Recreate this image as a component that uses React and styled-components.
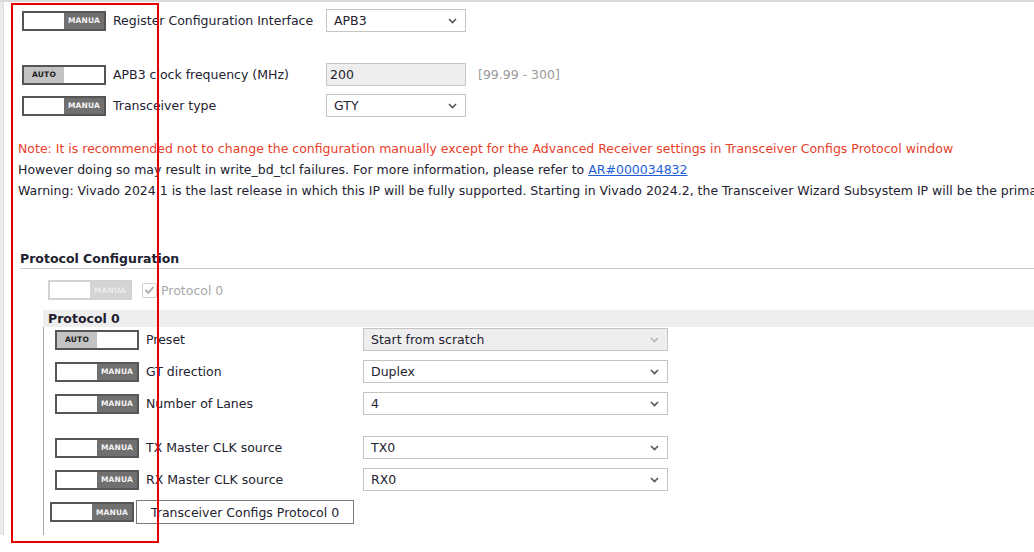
import React from "react";
import styled, { createGlobalStyle } from "styled-components";

const GlobalStyle = createGlobalStyle`
  html, body { margin: 0; padding: 0; background: #fff; overflow: hidden; }
  body { font-family: "DejaVu Sans", Verdana, sans-serif; font-size: 12px; color: #222; }
`;

const colors = {
  texte: "#222230",
  bordure: "#c4c4c4",
  rouge: "#e8402a",
  lien: "#1f5fd8",
  grisFond: "#eeeeee",
};

const topFields = [
  { id: "reg", mode: "manual", label: "Register Configuration Interface", kind: "select", value: "APB3" },
  { id: "clk", mode: "auto", label: "APB3 clock frequency (MHz)", kind: "input", value: "200", hint: "[99.99 - 300]", gapBefore: 31 },
  { id: "type", mode: "manual", label: "Transceiver type", kind: "select", value: "GTY", gapBefore: 8 },
];

const protocolFields = [
  { id: "preset", mode: "auto", label: "Preset", value: "Start from scratch", disabled: true },
  { id: "dir", mode: "manual", label: "GT direction", value: "Duplex" },
  { id: "lanes", mode: "manual", label: "Number of Lanes", value: "4" },
  { id: "tx", mode: "manual", label: "TX Master CLK source", value: "TX0", gapBefore: 12 },
  { id: "rx", mode: "manual", label: "RX Master CLK source", value: "RX0" },
];

function ModeToggle({ mode, disabled }) {
  return (
    <Toggle $disabled={disabled}>
      {mode === "auto" ? (
        <>
          <Half $tone="auto">AUTO</Half>
          <Half $tone="blank" />
        </>
      ) : (
        <>
          <Half $tone="blank" />
          <Half $tone={disabled ? "ghost" : "manual"}>MANUA</Half>
        </>
      )}
    </Toggle>
  );
}

function Chevron({ disabled }) {
  return (
    <svg width="9" height="6" viewBox="0 0 9 6">
      <path d="M1 1 L4.5 4.5 L8 1" fill="none" stroke={disabled ? "#b8b8b8" : "#555"} strokeWidth="1.6" />
    </svg>
  );
}

function Dropdown({ value, width, disabled }) {
  return (
    <Select $width={width} $disabled={disabled}>
      <span>{value}</span>
      <Chevron disabled={disabled} />
    </Select>
  );
}

export default function App() {
  return (
    <>
      <GlobalStyle />
      <Page>
        <Frame>
          <Content>
            <TopSection>
              {topFields.map((f) => (
                <Row key={f.id} $gap={f.gapBefore}>
                  <ModeToggle mode={f.mode} />
                  <Label $width={220}>{f.label}</Label>
                  {f.kind === "select" ? (
                    <Dropdown value={f.value} width={140} />
                  ) : (
                    <Field>{f.value}</Field>
                  )}
                  {f.hint && <Hint>{f.hint}</Hint>}
                </Row>
              ))}
            </TopSection>

            <Notes>
              <NoteLine $red>
                Note: It is recommended not to change the configuration manually except for the Advanced Receiver settings in Transceiver Configs Protocol window
              </NoteLine>
              <NoteLine>
                However doing so may result in write_bd_tcl failures. For more information, please refer to <Link>AR#000034832 </Link>
              </NoteLine>
              <NoteLine>
                Warning: Vivado 2024.1 is the last release in which this IP will be fully supported. Starting in Vivado 2024.2, the Transceiver Wizard Subsystem IP will be the primary IP for configuring transceivers.
              </NoteLine>
            </Notes>

            <SectionTitle>Protocol Configuration</SectionTitle>

            <EnableRow>
              <ModeToggle mode="manual" disabled />
              <CheckBox>
                <svg width="11" height="10" viewBox="0 0 11 10">
                  <path d="M1.5 5 L4.3 7.8 L9.5 1.8" fill="none" stroke="#b0b0b0" strokeWidth="2" />
                </svg>
              </CheckBox>
              <DisabledText>Protocol 0</DisabledText>
            </EnableRow>

            <Group>
              <GroupHeader>Protocol 0</GroupHeader>
              <GroupBody>
                {protocolFields.map((f) => (
                  <ProtoRow key={f.id} $gap={f.gapBefore}>
                    <ModeToggle mode={f.mode} />
                    <Label $width={224}>{f.label}</Label>
                    <Dropdown value={f.value} width={305} disabled={f.disabled} />
                  </ProtoRow>
                ))}
                <ButtonRow>
                  <ModeToggle mode="manual" />
                  <ConfigButton>Transceiver Configs Protocol 0</ConfigButton>
                </ButtonRow>
              </GroupBody>
            </Group>
          </Content>
        </Frame>
        <Highlight />
      </Page>
    </>
  );
}

// --- STYLES ---

const Page = styled.div`
  position: relative;
  width: 1034px;
  height: 552px;
  border-top: 2px solid #dadada;
  box-sizing: border-box;
  overflow: hidden;
  background: #fff;
`;

const Frame = styled.div`
  height: 533px;
  border-left: 3px solid #ebebeb;
  box-shadow: inset 1px 0 0 #dcdcdc;
  display: flex;
`;

const Content = styled.div`
  flex: 1;
  min-width: 0;
  padding: 7px 0 0 15px;
  display: flex;
  flex-direction: column;
`;

const TopSection = styled.div`
  display: flex;
  flex-direction: column;
  padding-left: 4px;
`;

const Row = styled.div`
  display: flex;
  align-items: center;
  height: 23px;
  margin-top: ${(p) => p.$gap || 0}px;
`;

const Toggle = styled.div`
  display: flex;
  width: 84px;
  height: 20px;
  box-sizing: border-box;
  border: 2px solid ${(p) => (p.$disabled ? "#d2d2d2" : "#555555")};
  flex-shrink: 0;
`;

const Half = styled.span`
  flex: 1;
  display: flex;
  align-items: center;
  justify-content: center;
  font-family: "DejaVu Sans", Verdana, sans-serif;
  font-weight: bold;
  font-size: 7.5px;
  letter-spacing: 0.2px;
  background: ${(p) =>
    p.$tone === "manual" ? "#707070" : p.$tone === "auto" ? "#c3c3c3" : p.$tone === "ghost" ? "#d4d4d4" : "#ffffff"};
  color: ${(p) => (p.$tone === "auto" ? "#1a1a1a" : p.$tone === "ghost" ? "#ececec" : "#f4f4f4")};
`;

const Label = styled.span`
  width: ${(p) => p.$width}px;
  padding-left: 7px;
  box-sizing: border-box;
  flex-shrink: 0;
  font-size: 12.5px;
  color: ${colors.texte};
  white-space: nowrap;
`;

const Select = styled.div`
  width: ${(p) => p.$width}px;
  height: 23px;
  box-sizing: border-box;
  border: 1px solid ${colors.bordure};
  background: ${(p) => (p.$disabled ? colors.grisFond : "#fff")};
  display: flex;
  align-items: center;
  justify-content: space-between;
  padding: 0 8px 0 7px;
  font-size: 12.5px;
  color: ${colors.texte};
  flex-shrink: 0;
`;

const Field = styled.div`
  width: 140px;
  height: 23px;
  box-sizing: border-box;
  border: 1px solid ${colors.bordure};
  background: ${colors.grisFond};
  display: flex;
  align-items: center;
  padding-left: 3px;
  font-size: 12.5px;
  color: ${colors.texte};
`;

const Hint = styled.span`
  margin-left: 12px;
  font-size: 12.5px;
  color: #999;
`;

const Notes = styled.div`
  margin-top: 21px;
  display: flex;
  flex-direction: column;
`;

const NoteLine = styled.div`
  line-height: 21px;
  font-size: 12.5px;
  white-space: nowrap;
  color: ${(p) => (p.$red ? colors.rouge : colors.texte)};
`;

const Link = styled.a`
  color: ${colors.lien};
  text-decoration: underline;
  cursor: pointer;
`;

const SectionTitle = styled.div`
  margin: 49px 0 0 2px;
  font-size: 12.5px;
  font-weight: bold;
  line-height: 18px;
  color: ${colors.texte};
  border-bottom: 1px solid #cccccc;
`;

const EnableRow = styled.div`
  display: flex;
  align-items: center;
  height: 22px;
  margin: 10px 0 0 30px;
`;

const CheckBox = styled.span`
  width: 15px;
  height: 15px;
  box-sizing: border-box;
  border: 1px solid #cfcfcf;
  border-radius: 2px;
  margin-left: 10px;
  display: flex;
  align-items: center;
  justify-content: center;
`;

const DisabledText = styled.span`
  margin-left: 4px;
  font-size: 12.5px;
  color: #a8a8a8;
`;

const Group = styled.div`
  margin: 9px 0 0 25px;
  display: flex;
  flex-direction: column;
  flex: 1;
`;

const GroupHeader = styled.div`
  height: 17px;
  line-height: 17px;
  background: ${colors.grisFond};
  padding-left: 5px;
  font-size: 12.5px;
  font-weight: bold;
  color: ${colors.texte};
`;

const GroupBody = styled.div`
  flex: 1;
  border-left: 1px solid #a9a9b3;
  padding: 1px 0 0 11px;
  display: flex;
  flex-direction: column;
  gap: 9px;
`;

const ProtoRow = styled.div`
  display: flex;
  align-items: center;
  height: 23px;
  margin-top: ${(p) => p.$gap || 0}px;
`;

const ButtonRow = styled.div`
  display: flex;
  align-items: center;
  margin-left: -5px;
  gap: 2px;
`;

const ConfigButton = styled.button`
  height: 24px;
  padding: 0 14px;
  background: #fff;
  border: 1px solid #7a7a7a;
  font-family: "DejaVu Sans", Verdana, sans-serif;
  font-size: 12.5px;
  color: ${colors.texte};
  cursor: pointer;
`;

const Highlight = styled.div`
  position: absolute;
  left: 11px;
  top: 1px;
  width: 148px;
  height: 540px;
  box-sizing: border-box;
  border: 2px solid #e80000;
  pointer-events: none;
`;
